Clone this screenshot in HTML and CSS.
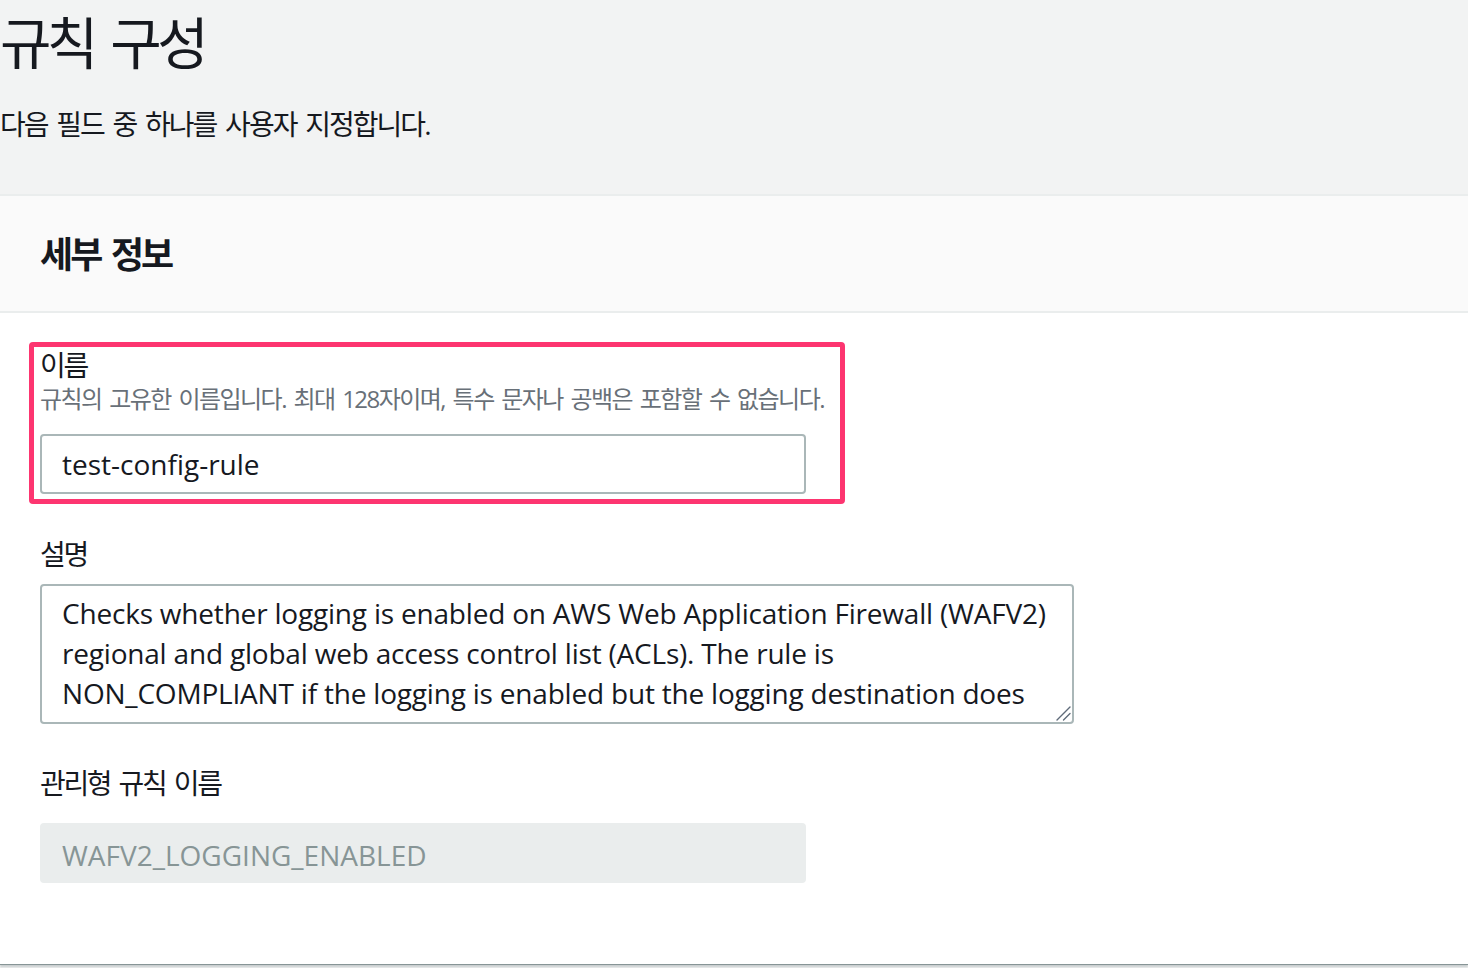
FILE: index.html
```html
<!DOCTYPE html>
<html lang="ko">
<head>
<meta charset="utf-8">
<title>규칙 구성</title>
<link rel="stylesheet" href="styles.css">
</head>
<body>
<div class="page">
  <header class="page-header">
    <h1 class="page-title">규칙 구성</h1>
    <p class="page-desc">다음 필드 중 하나를 사용자 지정합니다.</p>
  </header>

  <section class="container">
    <div class="container-header">
      <h2 class="container-title">세부 정보</h2>
    </div>
    <div class="container-body">
      <div class="field field-name">
        <label class="field-label" for="rule-name">이름</label>
        <div class="field-hint">규칙의 고유한 이름입니다. 최대 128자이며, 특수 문자나 공백은 포함할 수 없습니다.</div>
        <input class="text-input" id="rule-name" type="text" value="test-config-rule">
        <span class="highlight-box" aria-hidden="true"></span>
      </div>

      <div class="field field-desc">
        <label class="field-label" for="rule-desc">설명</label>
        <div class="textarea-wrap">
          <textarea class="text-area" id="rule-desc">Checks whether logging is enabled on AWS Web Application Firewall (WAFV2) regional and global web access control list (ACLs). The rule is NON_COMPLIANT if the logging is enabled but the logging destination does not match the value of the parameter.</textarea>
          <svg class="resize-grip" width="16" height="16" viewBox="0 0 16 16" aria-hidden="true">
            <path d="M2 15 L15 2 M8.5 15 L15 8.5" stroke="#5f6b7a" stroke-width="1.4" stroke-linecap="round" fill="none"/>
          </svg>
        </div>
      </div>

      <div class="field field-managed">
        <label class="field-label" for="managed-name">관리형 규칙 이름</label>
        <input class="text-input text-input-disabled" id="managed-name" type="text" value="WAFV2_LOGGING_ENABLED" disabled>
      </div>
    </div>
  </section>
</div>
</body>
</html>
```

FILE: styles.css
```css
* {
  box-sizing: border-box;
}

html, body {
  margin: 0;
  padding: 0;
}

body {
  background: #f2f3f3;
  color: #16191f;
  font-family: "Open Sans", "Noto Sans CJK KR", sans-serif;
  width: 1468px;
  height: 968px;
  overflow: hidden;
}

.page {
  display: flex;
  flex-direction: column;
}

/* Korean text: tighter syllable pitch, wider word gaps */
.page-title,
.page-desc,
.container-title,
.field-label,
.field-hint {
  letter-spacing: -0.083em;
  word-spacing: 0.12em;
}

/* ---------- page header ---------- */
.page-header {
  height: 194px;
  padding: 10px 0 0 0;
  background: #f2f3f3;
}

.page-title {
  margin: 0;
  font-size: 56px;
  line-height: 64px;
  font-weight: 400;
  color: #16191f;
}

.page-desc {
  margin: 30px 0 0 0;
  font-size: 28px;
  line-height: 40px;
  letter-spacing: -0.07em;
  color: #16191f;
}

/* ---------- container ---------- */
.container {
  background: #ffffff;
  border-top: 2px solid #eaeded;
  box-shadow: 0 1px 0 #879596, 0 3px 2px rgba(0, 28, 36, 0.18);
}

.container-header {
  background: #fafafa;
  border-bottom: 2px solid #eaeded;
  padding: 39px 40px 36px 40px;
}

.container-title {
  margin: 0;
  font-size: 36px;
  line-height: 40px;
  font-weight: 700;
  color: #16191f;
}

.container-body {
  display: flex;
  flex-direction: column;
  padding: 34px 40px 81px 40px;
}

/* ---------- fields ---------- */
.field {
  display: flex;
  flex-direction: column;
  align-items: flex-start;
}

.field-name {
  position: relative;
}

.field-desc {
  margin-top: 42px;
}

.field-managed {
  margin-top: 41px;
}

.field-label {
  display: block;
  font-size: 28px;
  line-height: 36px;
  color: #16191f;
}

.field-hint {
  font-size: 24px;
  line-height: 32px;
  letter-spacing: -0.064em;
  color: #687078;
}

.text-input {
  display: block;
  width: 766px;
  height: 60px;
  margin: 19px 0 0 0;
  padding: 0 20px;
  border: 2px solid #aab7b8;
  border-radius: 4px;
  background: #ffffff;
  font-family: "Open Sans", "Noto Sans CJK KR", sans-serif;
  font-size: 28px;
  color: #16191f;
  outline: none;
}

.field-managed .text-input {
  margin-top: 22px;
  padding-top: 3px;
}

.text-input-disabled {
  background: #eaeded;
  border-color: #eaeded;
  color: #879596;
  -webkit-text-fill-color: #879596;
  opacity: 1;
}

.textarea-wrap {
  position: relative;
  margin-top: 12px;
}

.text-area {
  display: block;
  width: 1034px;
  height: 140px;
  padding: 7px 14px 0 20px;
  border: 2px solid #aab7b8;
  border-radius: 4px;
  background: #ffffff;
  font-family: "Open Sans", "Noto Sans CJK KR", sans-serif;
  font-size: 28px;
  line-height: 40px;
  letter-spacing: -0.2px;
  color: #16191f;
  overflow: hidden;
  resize: none;
  outline: none;
}

.resize-grip {
  position: absolute;
  right: 3px;
  bottom: 3px;
  pointer-events: none;
}

/* annotation overlay around the name field */
.highlight-box {
  position: absolute;
  top: -5px;
  left: -11px;
  width: 816px;
  height: 162px;
  border: 5px solid #fd3570;
  border-radius: 4px;
  pointer-events: none;
}
```
